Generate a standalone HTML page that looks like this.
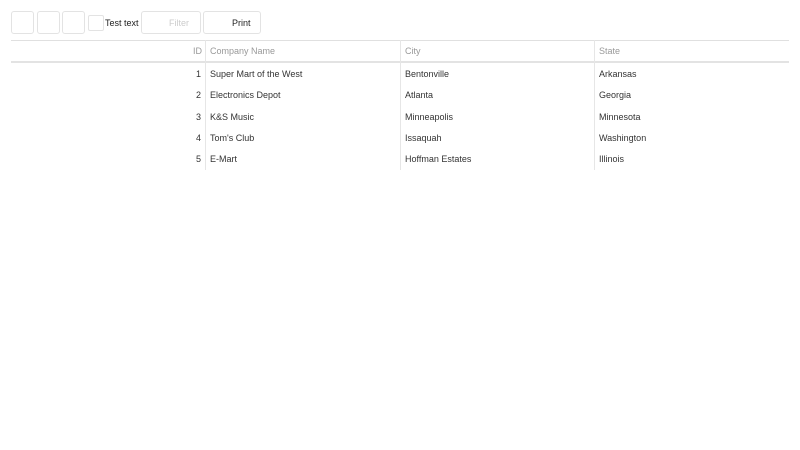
<!DOCTYPE html>
<html><head><style>
*{box-sizing:border-box;margin:0;padding:0}
body{width:800px;height:450px;background:#fff;font-family:"Liberation Sans",sans-serif;font-size:9px;color:#333;position:relative;overflow:hidden}
.b{position:absolute;border:1px solid #e3e3e3;border-radius:3px;background:#fff}
.t{position:absolute;white-space:nowrap}
.hl{position:absolute;left:11px;width:778px;height:1px;background:#e0e0e0}
.vl{position:absolute;top:40px;height:130px;width:1px;background:#e6e6e6}
</style></head><body>
<div class="b" style="left:11px;top:11px;width:23px;height:23px"></div>
<div class="b" style="left:37px;top:11px;width:23px;height:23px"></div>
<div class="b" style="left:62px;top:11px;width:23px;height:23px"></div>
<div class="b" style="left:88px;top:15px;width:16px;height:16px;border-radius:2px"></div>
<div class="t" style="left:105px;top:18px;color:#222">Test text</div>
<div class="b" style="left:141px;top:11px;width:60px;height:23px"></div>
<div class="t" style="left:169px;top:18px;color:#ccc">Filter</div>
<div class="b" style="left:203px;top:11px;width:58px;height:23px"></div>
<div class="t" style="left:232px;top:18px;color:#222">Print</div>
<div class="hl" style="top:40px"></div>
<div class="hl" style="top:61px;height:2px;background:#e3e3e3"></div>
<div class="vl" style="left:205px"></div>
<div class="vl" style="left:400px"></div>
<div class="vl" style="left:594px"></div>
<div class="t" style="left:193px;top:46px;color:#999">ID</div>
<div class="t" style="left:210px;top:46px;color:#999">Company Name</div>
<div class="t" style="left:405px;top:46px;color:#999">City</div>
<div class="t" style="left:599px;top:46px;color:#999">State</div>

<div class="t" style="left:196px;top:69px">1</div><div class="t" style="left:210px;top:69px">Super Mart of the West</div><div class="t" style="left:405px;top:69px">Bentonville</div><div class="t" style="left:599px;top:69px">Arkansas</div>
<div class="t" style="left:196px;top:90px">2</div><div class="t" style="left:210px;top:90px">Electronics Depot</div><div class="t" style="left:405px;top:90px">Atlanta</div><div class="t" style="left:599px;top:90px">Georgia</div>
<div class="t" style="left:196px;top:112px">3</div><div class="t" style="left:210px;top:112px">K&amp;S Music</div><div class="t" style="left:405px;top:112px">Minneapolis</div><div class="t" style="left:599px;top:112px">Minnesota</div>
<div class="t" style="left:196px;top:133px">4</div><div class="t" style="left:210px;top:133px">Tom's Club</div><div class="t" style="left:405px;top:133px">Issaquah</div><div class="t" style="left:599px;top:133px">Washington</div>
<div class="t" style="left:196px;top:154px">5</div><div class="t" style="left:210px;top:154px">E-Mart</div><div class="t" style="left:405px;top:154px">Hoffman Estates</div><div class="t" style="left:599px;top:154px">Illinois</div>
</body></html>
